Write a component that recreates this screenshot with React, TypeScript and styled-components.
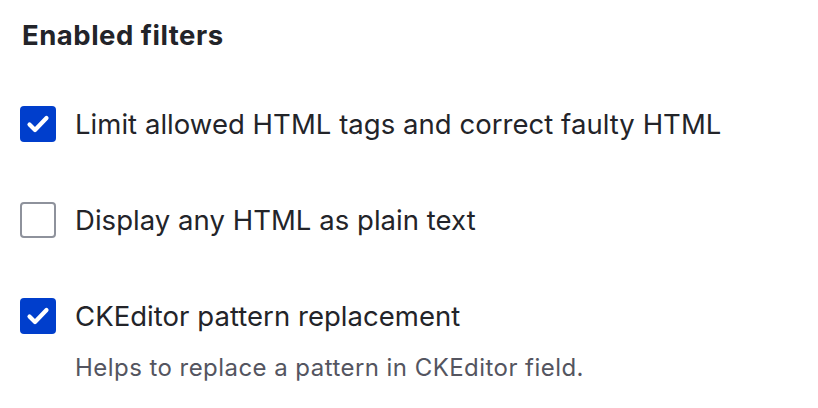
import React from "react";
import styled, { createGlobalStyle } from "styled-components";

const Global = createGlobalStyle`
  html, body { margin: 0; padding: 0; background: #fff; }
  body { font-family: Inter, "Noto Sans", sans-serif; color: #232429; }
`;

const Page = styled.div`
  padding: 17px 20px 0 20px;
  display: flex;
  flex-direction: column;
`;

const Heading = styled.h4`
  margin: 0 0 0 2px;
  font-size: 27.5px;
  line-height: 36px;
  font-weight: 700;
  color: #232429;
  letter-spacing: 0.5px;
`;

const List = styled.div`
  margin-top: 53px;
  display: flex;
  flex-direction: column;
  gap: 60px;
`;

const Item = styled.div`
  display: flex;
  flex-direction: column;
`;

const Row = styled.label`
  display: flex;
  align-items: center;
  gap: 19px;
  height: 36px;
`;

const Box = styled.span<{ $checked: boolean }>`
  box-sizing: border-box;
  width: 36px;
  height: 36px;
  flex: none;
  border-radius: 4px;
  background: ${(p) => (p.$checked ? "#003ecc" : "#fff")};
  border: ${(p) => (p.$checked ? "none" : "2px solid #8e929c")};
  display: flex;
  align-items: center;
  justify-content: center;
`;

const Label = styled.span`
  font-size: 27.5px;
  line-height: 36px;
  color: #232429;
  letter-spacing: 0.04px;
`;

const Description = styled.div`
  margin: 18px 0 0 55px;
  font-size: 24px;
  line-height: 32px;
  color: #545560;
  letter-spacing: 0.45px;
`;

const Check = () => (
  <svg width="24" height="20" viewBox="0 0 24 20" fill="none">
    <path d="M3.5 10.5 L9 16 L20.5 4" stroke="#fff" strokeWidth="4.2" strokeLinecap="round" strokeLinejoin="round" />
  </svg>
);

const items = [
  { label: "Limit allowed HTML tags and correct faulty HTML", checked: true },
  { label: "Display any HTML as plain text", checked: false },
  { label: "CKEditor pattern replacement", checked: true, desc: "Helps to replace a pattern in CKEditor field." },
];

export default function App() {
  return (
    <>
      <Global />
      <Page>
        <Heading>Enabled filters</Heading>
        <List>
          {items.map((it) => (
            <Item key={it.label}>
              <Row>
                <Box $checked={it.checked}>{it.checked && <Check />}</Box>
                <Label>{it.label}</Label>
              </Row>
              {it.desc && <Description>{it.desc}</Description>}
            </Item>
          ))}
        </List>
      </Page>
    </>
  );
}
